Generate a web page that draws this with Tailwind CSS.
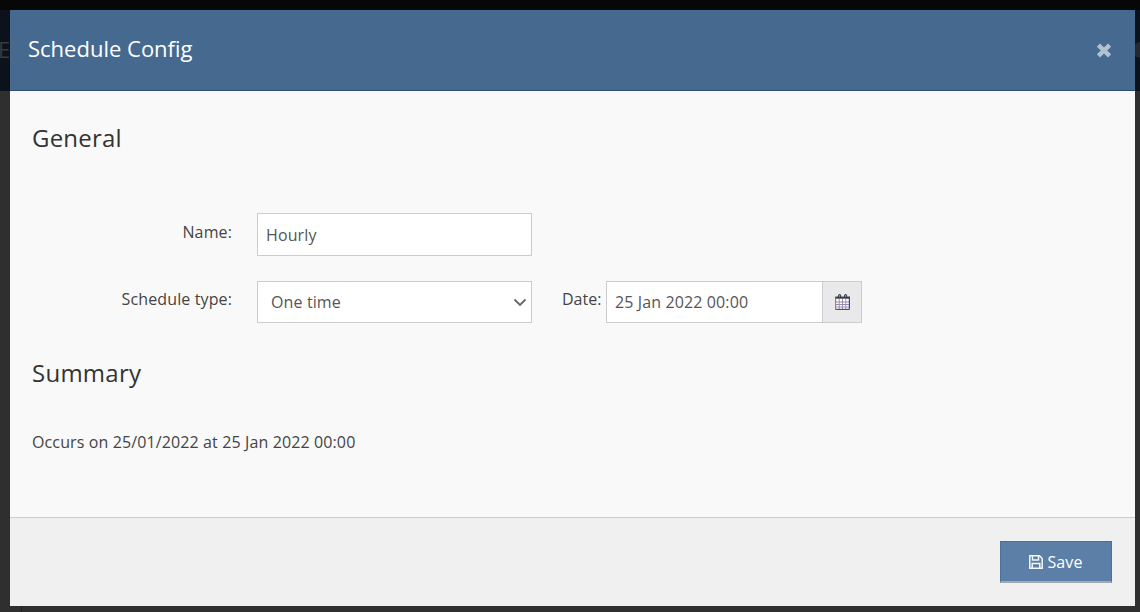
<!DOCTYPE html>
<html>
<head>
<meta charset="utf-8">
<script src="https://cdn.jsdelivr.net/npm/@tailwindcss/browser@4"></script>
</head>
<body class="m-0 overflow-hidden">
<div class="relative w-[1140px] h-[612px] bg-[#2f2f2f] font-['Open_Sans',sans-serif] text-[#333]">
  <!-- backdrop page behind the dialog -->
  <div class="h-[10px] bg-[#070707]"></div>
  <div class="h-[81px] bg-[#0b121b] flex items-center justify-between overflow-hidden">
    <span class="text-[#3a3a3a] text-[22px] ml-[-2px] mt-[-2px]">E</span>
    <span class="w-[12px] h-[16px] mr-[-6px] mt-[-2px] rounded-full bg-[#25282d]"></span>
  </div>
  <div class="absolute left-[21px] bottom-0 w-px h-[6px] bg-[#222]"></div>
  <!-- dialog -->
  <div class="absolute left-[10px] top-[10px] w-[1125px] h-[596px] flex flex-col">
    <div class="h-[81px] shrink-0 bg-[#466a8f] border-b border-[#2b5075] flex items-center justify-between pl-[18px] pr-[23px]">
      <h1 class="text-[22px] font-normal text-white leading-[28px] mt-[-4px]">Schedule Config</h1>
      <svg class="w-[16px] h-[15px]" viewBox="0 0 16 15" fill="none" stroke="#b3c2d3" stroke-width="4.4"><path d="M2.4 2.2 13.6 12.8M13.6 2.2 2.4 12.8"/></svg>
    </div>
    <div class="flex-1 bg-[#f9f9f9] pl-[22px] flex flex-col">
      <h2 class="text-[24px] font-normal leading-[30px] mt-[32px] text-[#333] tracking-[0.2px]">General</h2>
      <div class="flex items-start mt-[60px] h-[43px]">
        <label class="w-[200px] text-right text-[16px] leading-[20px] mt-[9px] text-[#444] tracking-[0.12px]">Name:</label>
        <div class="ml-[25px] w-[275px] h-[43px] bg-white border border-[#ccc] flex items-center pl-[8px] text-[16px] text-[#555] tracking-[0.12px]">Hourly</div>
      </div>
      <div class="flex items-start mt-[25px] h-[42px]">
        <label class="w-[200px] text-right text-[16px] leading-[20px] mt-[8px] text-[#444] tracking-[0.12px]">Schedule type:</label>
        <div class="ml-[25px] w-[275px] h-[42px] bg-white border border-[#ccc] flex items-center justify-between pl-[13px] pr-[4px] text-[16px] text-[#555] tracking-[0.12px]">
          <span>One time</span>
          <svg class="w-[14px] h-[14px]" viewBox="0 0 14 14" fill="none" stroke="#666" stroke-width="1.8"><path d="M1.5 4.5 7 10 12.5 4.5"/></svg>
        </div>
        <label class="ml-[30px] text-[16px] leading-[20px] mt-[8px] text-[#444] w-[40px] shrink-0">Date:</label>
        <div class="ml-[4px] w-[256px] h-[42px] flex">
          <div class="flex-1 bg-white border border-[#ccc] flex items-center pl-[8px] text-[16px] text-[#555] tracking-[0.12px]">25 Jan 2022 00:00</div>
          <div class="w-[39px] bg-[#e9e9ec] border border-l-0 border-[#ccc] flex items-center justify-center">
            <svg class="w-[15px] h-[16px]" viewBox="0 0 15 16" fill="none">
              <rect x="0" y="2" width="15" height="14" fill="#fff"/>
              <path d="M1 8h13M1 10.5h13" stroke="#8a7fb0" stroke-width="0.9"/>
              <path d="M1 13h13" stroke="#7f8fc0" stroke-width="0.9"/>
              <path d="M4.2 5v10M7.5 5v10M10.8 5v10" stroke="#9a86a8" stroke-width="0.9"/>
              <path d="M0.6 2.6V15.4" stroke="#b5813a" stroke-width="1.2"/>
              <path d="M14.4 2.6V15.4" stroke="#4e4380" stroke-width="1.2"/>
              <path d="M0.6 15.4H14.4" stroke="#4a4552" stroke-width="1.1"/>
              <path d="M0.6 3.6H14.4" stroke="#3a3a44" stroke-width="2.2"/>
              <path d="M3.6 3.8V1.6A1 1 0 0 1 5.6 1.6V3.8M9.6 3.8V1.6A1 1 0 0 1 11.6 1.6V3.8" stroke="#3a3a50" stroke-width="1.1"/>
            </svg>
          </div>
        </div>
      </div>
      <h2 class="text-[24px] font-normal leading-[30px] mt-[35px] text-[#333] tracking-[0.25px]">Summary</h2>
      <p class="text-[16px] leading-[20px] mt-[44px] text-[#444] tracking-[0.12px]">Occurs on 25/01/2022 at 25 Jan 2022 00:00</p>
    </div>
    <div class="h-[89px] shrink-0 bg-[#f0f0f0] border-t border-[#ccc] flex items-start justify-end pt-[23px] pr-[23px]">
      <button class="w-[112px] h-[42px] bg-[#5b7fa6] border border-[#4d729a] border-b-2 border-b-[#a5a9ad] text-white text-[16px] flex items-center justify-center gap-[4px] tracking-[0.12px]">
        <svg class="w-[14px] h-[14px]" viewBox="0 0 14 14" fill="none" stroke="#f4f6f9" stroke-width="1.5"><path d="M0.8 0.8H10.5L13.2 3.5V13.2H0.8Z"/><path d="M3.5 0.8V5H9.5V0.8M3.2 13.2V8.5H10.8V13.2"/></svg>
        <span>Save</span>
      </button>
    </div>
  </div>
</div>
</body>
</html>
